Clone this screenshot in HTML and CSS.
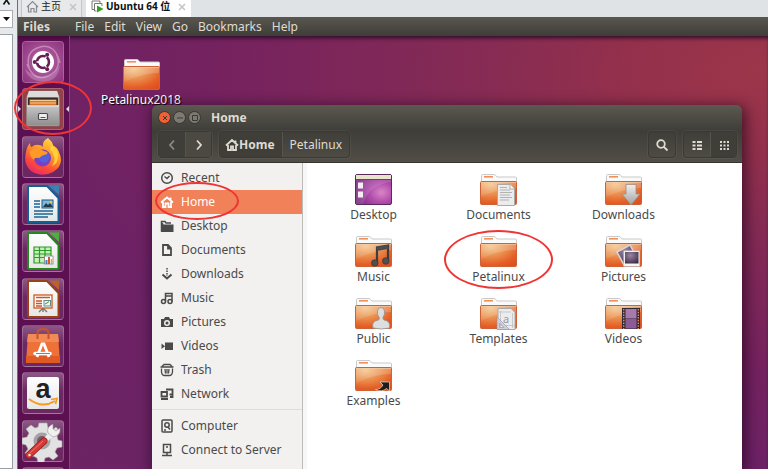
FILE: index.html
```
<!DOCTYPE html>
<html lang="en">
<head>
<meta charset="utf-8">
<title>Ubuntu 64 位</title>
<meta name="viewport" content="width=device-width, initial-scale=1">
<link rel="stylesheet" href="styles.css">
</head>
<body>
<svg class="defs" width="0" height="0" aria-hidden="true">
  <defs>
    <radialGradient id="orange" cx=".28" cy=".12" r="1"><stop offset="0" stop-color="#f3c084"/><stop offset=".45" stop-color="#e98d4c"/><stop offset=".8" stop-color="#e55d25"/><stop offset="1" stop-color="#df5020"/></radialGradient>
    <linearGradient id="shine" x1="0" y1="0" x2="0" y2="1"><stop offset="0" stop-color="#fff" stop-opacity=".25"/><stop offset="1" stop-color="#fff" stop-opacity=".08"/></linearGradient>
    <linearGradient id="silver" x1="0" y1="0" x2="0" y2="1"><stop offset="0" stop-color="#f0f0f0"/><stop offset="1" stop-color="#a0a0a0"/></linearGradient>
    <linearGradient id="steel" x1="0" y1="0" x2="0" y2="1"><stop offset="0" stop-color="#c6c6c6"/><stop offset="1" stop-color="#8e8e8e"/></linearGradient>
    <linearGradient id="paper" x1="0" y1="0" x2="0" y2="1"><stop offset="0" stop-color="#fff"/><stop offset="1" stop-color="#e6e6e6"/></linearGradient>
    <radialGradient id="violet" cx=".72" cy=".6" r=".75"><stop offset="0" stop-color="#da86c6"/><stop offset=".45" stop-color="#b04bab"/><stop offset="1" stop-color="#752a7c"/></radialGradient>
    <radialGradient id="photo" cx=".4" cy=".3" r=".8"><stop offset="0" stop-color="#9a85a4"/><stop offset="1" stop-color="#3a2a44"/></radialGradient>
    <linearGradient id="fire" x1=".8" y1="0" x2=".3" y2="1"><stop offset="0" stop-color="#ffe14a"/><stop offset=".4" stop-color="#ff9a24"/><stop offset=".75" stop-color="#fb4a3c"/><stop offset="1" stop-color="#e8286c"/></linearGradient>
    <symbol id="folder" viewBox="0 0 37 32">
      <path d="M1.5 9V1.500Q1.500.5 2.500.5H14q1 0 1.600.8L17 3H35.500q1 0 1 1V9z" fill="#fafafa" stroke="#c9c9c9"/>
      <path d="M4 2.800h9" stroke="#f0915c" stroke-width="1.600"/>
      <rect x=".5" y="7.500" width="36" height="23" rx="1" fill="url(#orange)" stroke="#ce6136"/>
      <path d="M1 8H36V14Q20 14 1 23z" fill="url(#shine)"/>
      <path d="M1 8.500H36" stroke="#f8cfa5" opacity=".6"/>
    </symbol>
  </defs>
</svg>

<div class="host">
  <aside class="host-side" aria-label="Library">
    <svg class="host-close" viewBox="0 0 13 9" aria-hidden="true"><path d="M3.500 4.500 6.500 0 9.500 4.500" fill="none" stroke="#111" stroke-width="1.600"/></svg>
    <button class="host-drop" aria-label="Filter"><svg viewBox="0 0 9 6"><path d="M1 1H8L4.500 5z" fill="#111"/></svg></button>
    <div class="host-tree"></div>
  </aside>
  <div class="host-main">
    <nav class="tabs">
      <div class="tab">
        <svg class="tab-icon" viewBox="0 0 13 13"><path d="M1 7 6.500 1.500 12 7M2.500 6v6H5V8.500H8V12h2.500V6" fill="none" stroke="#888b90" stroke-width="1.200"/></svg>
        <a href="#home">主页</a><button class="tab-x" aria-label="Close tab"><svg viewBox="0 0 8 8"><path d="M1 1 7 7M7 1 1 7"/></svg></button>
      </div>
      <div class="tab tab-on">
        <svg class="tab-icon" viewBox="0 0 13 13"><path d="M3 9.500H1V1H9V3" fill="none" stroke="#777"/><path d="M5.500 11H3.500V3.500h7.500V6" fill="#fff" stroke="#777"/><path d="M6 5.500V12.500L12.500 9z" fill="#2fa31e"/></svg>
        <a href="#vm">Ubuntu 64 位</a><button class="tab-x" aria-label="Close tab"><svg viewBox="0 0 8 8"><path d="M1 1 7 7M7 1 1 7"/></svg></button>
      </div>
    </nav>

    <div class="guest">
      <header class="menubar">
        <strong>Files</strong>
        <nav class="menus"><button>File</button><button>Edit</button><button>View</button><button>Go</button><button>Bookmarks</button><button>Help</button></nav>
      </header>
      <div class="desk">
        <nav class="launcher" aria-label="Launcher"><div class="tiles">
          <button class="tile tile-dash" aria-label="Search your computer"><svg viewBox="0 0 42 42">
            <g fill="none" stroke="#e3b8d8" opacity=".55" stroke-width="1.500"><path d="M7 27Q3 10 18 6T38 22"/><path d="M35 14Q40 29 26 35T5 23"/></g>
            <path d="M3 28Q10 35 21 36 33 36 38 24 36 40 22 41 6 40 3 28" fill="#fff" opacity=".2"/>
            <circle cx="21" cy="21" r="11" fill="#fff"/><circle cx="21" cy="21" r="6" fill="none" stroke="#642058" stroke-width="2.600"/>
            <g stroke="#fff" stroke-width="1.300"><path d="M21 21H12M21 21 26 13M21 21 26 29"/></g><circle cx="21" cy="21" r="4" fill="#fff"/>
            <g fill="#642058"><circle cx="12.700" cy="21" r="2"/><circle cx="25.200" cy="13.800" r="2"/><circle cx="25.200" cy="28.200" r="2"/></g></svg></button>
          <button class="tile tile-files" aria-label="Files"><svg viewBox="0 0 42 42">
            <path d="M7 3H35L37.500 10V36Q37.500 38 36 38H6Q4.500 38 4.500 36V10z" fill="#b5b4b2" stroke="#85807c" stroke-width=".6"/><path d="M7 3H35L37 9H5z" fill="#dcdcda"/>
            <rect x="6" y="9.500" width="30" height="8" rx="1" fill="#3b2a22"/><path d="M7.500 11.500H34.500V17.500H7.500z" fill="#d9752b"/><path d="M8 12.500H34M8 15H34" stroke="#f5cd98"/>
            <rect x="5" y="17.500" width="32" height="20" fill="url(#steel)"/><path d="M5 18H37" stroke="#eee"/>
            <rect x="16.500" y="25.500" width="9" height="6" rx="1" fill="#eee" stroke="#4b4b4b" stroke-width="1.200"/><path d="M18.500 29.500H23.500" stroke="#555"/></svg></button>
          <button class="tile" aria-label="Firefox"><svg viewBox="0 0 42 42">
            <path d="M26 2Q30 5 31.500 10 35 11 37 16 43 29 31 36 20 42 9 35 1 28 4 16 5 10 8 7 8 10 9.500 11 13 8 17 9 20 9 21 11 20 5 26 2" fill="url(#fire)"/>
            <circle cx="20.500" cy="22" r="8.500" fill="#7a3fc2"/><circle cx="22" cy="21" r="5.500" fill="#5560dd"/>
            <path d="M8 15Q14 10 22 15 27 16 25 18 20 19 17 22 12 21 12 24 7 20 8 15" fill="#ff9a28"/>
            <path d="M28 13Q36 22 30 30 37 27 36 18 34 11 30 9z" fill="#ffcf3c"/><path d="M8 24Q12 34 24 32 14 38 8 24" fill="#fb4a3c"/></svg></button>
          <button class="tile" aria-label="LibreOffice Writer"><svg viewBox="0 0 42 42">
            <path d="M7 3H25L36.500 15V38Q36.500 39 35.500 39H7Q6 39 6 38V4Q6 3 7 3z" fill="url(#paper)" stroke="#126093" stroke-width="2"/><path d="M27 2.500H37V12z" fill="#3a81b5"/>
            <path d="M12 18H18M12 21H18M12 24H18M12 28H31M12 31H31M12 34H26" stroke="#1a6699" stroke-width="1.600"/><rect x="20" y="17" width="11" height="8" fill="#7fb9df" stroke="#1a5b8a"/><path d="M21 24 24 20 26 22 28 20 31 24z" fill="#233a49"/><circle cx="29" cy="19" r="1.300" fill="#f5c542"/></svg></button>
          <button class="tile" aria-label="LibreOffice Calc"><svg viewBox="0 0 42 42">
            <path d="M7 3H25L36.500 15V38Q36.500 39 35.500 39H7Q6 39 6 38V4Q6 3 7 3z" fill="url(#paper)" stroke="#23891d" stroke-width="2"/><path d="M27 2.500H37V12z" fill="#4caf3e"/>
            <rect x="12" y="17" width="17" height="16" fill="#c8efb9"/><path d="M12 17H29V33H12zM12 20.500H29M12 24H29M12 27.500H29M17.500 17V33M23 17V33" fill="none" stroke="#2c9b2a" stroke-width="1.200"/><rect x="22.500" y="26" width="8.500" height="8" fill="#fff" stroke="#777" stroke-width=".7"/><path d="M24.500 34V30" stroke="#3a80c8" stroke-width="2"/><path d="M27 34V27" stroke="#d9532b" stroke-width="2"/><path d="M29.500 34V29" stroke="#e9a23b" stroke-width="1.500"/></svg></button>
          <button class="tile" aria-label="LibreOffice Impress"><svg viewBox="0 0 42 42">
            <path d="M7 3H25L36.500 15V38Q36.500 39 35.500 39H7Q6 39 6 38V4Q6 3 7 3z" fill="url(#paper)" stroke="#9a4216" stroke-width="2"/><path d="M27 2.500H37V12z" fill="#b9622e"/>
            <path d="M21 30V34M21 30 17 34M21 30 25 34" stroke="#777" stroke-width="1.400"/><rect x="12" y="17" width="18" height="13" fill="#fff" stroke="#cc5a1e" stroke-width="1.300"/><path d="M14 19.500H28M14 23H20M14 25.500H20M14 28H20" stroke="#c5572a" stroke-width="1.500"/><rect x="22" y="22.500" width="6.500" height="5.500" fill="#ecf7e6" stroke="#688"/><path d="M23 26 25 25 27 23.500" stroke="#3d9e2b" fill="none"/></svg></button>
          <button class="tile" aria-label="Ubuntu Software"><svg viewBox="0 0 42 42">
            <path d="M6 9H36L38 38H4z" fill="#ee7138"/><path d="M6 9H36L37 17H5z" fill="#f28a55"/><path d="M4 31H38V38H4z" fill="#e05a24"/>
            <path d="M15.500 14V8Q15.500 4 21 4T26.500 8V14" fill="none" stroke="#c9532c" stroke-width="2"/>
            <path d="M15 32 20 19H22L27 32" fill="none" stroke="#fff" stroke-width="2.800"/><path d="M13 28.500H28" stroke="#fff" stroke-width="3.500" stroke-linecap="round"/><path d="M14 28.500H28" stroke="#e6602b"/></svg></button>
          <button class="tile" aria-label="Amazon"><svg viewBox="0 0 42 42"><rect x="5" y="5" width="32" height="32" rx="2" fill="url(#paper)"/><text x="21" y="26" text-anchor="middle" class="logo-a">a</text><path d="M7 27Q20 37 33 29" fill="none" stroke="#f79a1e" stroke-width="2"/><path d="M29 27.500 35 26.500 33.500 32" fill="none" stroke="#f79a1e" stroke-width="1.700"/></svg></button>
          <button class="tile" aria-label="System Settings"><svg viewBox="0 0 42 42">
            <path d="M17 3h8l1 5 4 2 4-3 4 5-3 4 1 4 4 1v6l-5 1-2 4 3 4-5 4-4-3-4 1-1 5h-6l-1-5-4-2-4 2-4-5 3-4-2-4-4-1v-6l5-1 2-4-3-4 5-4 4 3 3-1z" fill="#e2e2e2" stroke="#aaa" stroke-width=".6"/><circle cx="20" cy="21" r="8.500" fill="#a4a2a3"/><circle cx="20" cy="21" r="5" fill="#77596f"/>
            <path d="M20 24 29 14" stroke="#eee" stroke-width="5"/><path d="M26 13Q24 7 31 4L31 9 34 11 38 8Q39 15 31 17z" fill="#f1f1f1" stroke="#999" stroke-width=".6"/><path d="M7 35 22 21" stroke="#8f1616" stroke-width="7" stroke-linecap="round"/><path d="M7 35 22 21" stroke="#d63a36" stroke-width="5.500" stroke-linecap="round"/><path d="M8 33 21 21" stroke="#ef7a70" stroke-width="1"/><circle cx="7.500" cy="35" r="1.200" fill="#eee"/></svg></button>
          <button class="tile" aria-label="Disk"></button>
        </div></nav>
        <main class="wallpaper">
          <a class="shortcut" href="#petalinux2018"><svg class="folder"><use href="#folder"/></svg><span>Petalinux2018</span></a>

          <section class="window" aria-label="Home">
            <header class="chrome">
              <div class="title">
                <button class="dot dot-close" aria-label="Close"><svg viewBox="0 0 12 12"><path d="M4 4 8 8M8 4 4 8"/></svg></button>
                <button class="dot" aria-label="Minimize"><svg viewBox="0 0 12 12"><path d="M3 6H9"/></svg></button>
                <button class="dot" aria-label="Maximize"><svg viewBox="0 0 12 12"><path d="M3.500 3.500H8.500V8.500H3.500z"/></svg></button>
                <h1>Home</h1>
              </div>
              <div class="tools">
                <div class="group"><button class="sq on" aria-label="Back"><svg class="dim" viewBox="0 0 14 14"><path d="M9 2.500 5 7 9 11.500"/></svg></button><button class="sq lit" aria-label="Forward"><svg viewBox="0 0 14 14"><path d="M5 2.500 9 7 5 11.500"/></svg></button></div>
                <div class="group"><button class="crumb on"><svg viewBox="0 0 14 14"><path d="M1 7.500 7 2 13 7.500M3 7V12H6V8.500H8V12H11V7M10.500 5V2.500"/></svg>Home</button><button class="crumb">Petalinux</button></div>
                <div class="group push"><button class="sq" aria-label="Search"><svg viewBox="0 0 14 14"><circle cx="6" cy="6" r="3.800"/><path d="M8.500 8.500 12.500 12.500"/></svg></button></div>
                <div class="group"><button class="sq" aria-label="List view"><svg viewBox="0 0 14 14"><path d="M2.500 4H5.500M7 4H12M2.500 7.500H5.500M7 7.500H12M2.500 11H5.500M7 11H12"/></svg></button><button class="sq on" aria-label="Icon view"><svg class="grid-icon" viewBox="0 0 14 14"><path d="M3 4H12M3 7.500H12M3 11H12"/></svg></button></div>
              </div>
            </header>
            <div class="body">
              <nav class="places">
                <a href="#recent"><svg viewBox="0 0 14 14"><circle cx="7" cy="7" r="5.300"/><path d="M4.500 5.500 7 7.500 9.500 5"/></svg>Recent</a>
                <a href="#home" class="here"><svg viewBox="0 0 14 14"><path d="M1 7.500 7 2.500 13 7.500M3 7V12H5.500V8.500H8.500V12H11V7M10.500 5V2.500" stroke-width="1.800"/></svg>Home</a>
                <a href="#desktop"><svg viewBox="0 0 14 14"><path d="M1.500 12.500V2.500H5L6 4H11" /><path class="solid" d="M3.500 5.500H13.500V13H1V4H3z"/></svg>Desktop</a>
                <a href="#documents"><svg viewBox="0 0 14 14"><path d="M3 2H8L11 5V12H3zM8 2V5.500H11" stroke-width="1.800"/></svg>Documents</a>
                <a href="#downloads"><svg viewBox="0 0 14 14"><path d="M7 1V9" stroke-dasharray="1.500 1"/><path d="M2.500 7.500 7 11.500 11.500 7.500" stroke-width="2"/></svg>Downloads</a>
                <a href="#music"><svg viewBox="0 0 14 14"><path d="M5.500 10.500V2.500H12V10.500M5.500 5H12"/><circle cx="3.500" cy="10.500" r="2"/><circle cx="10" cy="10.500" r="2"/></svg>Music</a>
                <a href="#pictures"><svg viewBox="0 0 14 14"><path class="solid" fill-rule="evenodd" d="M1 4H4L5 2H9L10 4H13V12H1zM7 5A3 3 0 1 0 7 11 3 3 0 1 0 7 5"/><circle cx="7" cy="8" r=".8"/></svg>Pictures</a>
                <a href="#videos"><svg viewBox="0 0 14 14"><path class="solid" d="M5 3.500H13V11H5zM1.500 4.500 5 7.300 1.500 10z"/></svg>Videos</a>
                <a href="#trash"><svg viewBox="0 0 14 14"><path d="M2 3.500 4 1.500H10L12 3.500M0.500 4H13.500M1.500 5.500V9Q2 12.500 4 12.500H10Q12 12.500 12.500 9V5.500M5 6 5.500 10.500M7 6V10.500M9 6 8.500 10.500" stroke-width="1.300"/></svg>Trash</a>
                <a href="#network"><svg viewBox="0 0 14 14"><path d="M1.500 5H7V9.500H1.500zM6 2.500H12.500V7.500H9.500M1 12H8M10 10H12.500V8" stroke-width="1.800"/></svg>Network</a>
                <hr>
                <a href="#computer"><svg viewBox="0 0 14 14"><rect x="2" y="1" width="10" height="12" rx="1"/><circle cx="7" cy="6" r="2.200"/><path d="M8 8 10 10.500M4 11H6"/></svg>Computer</a>
                <a href="#server"><svg viewBox="0 0 14 14"><path d="M3.500 1.500H10.500V9.500H3.500zM7 10V12M2 12.500H12M6 4H8"/></svg>Connect to Server</a>
              </nav>
              <div class="files">
                <a class="file" href="#desktop"><svg class="folder" viewBox="0 0 37 32"><rect x=".5" y=".5" width="36" height="30" rx="1.500" fill="url(#violet)" stroke="#5a2a5c"/><path d="M1 1H36V5H1z" fill="#e7e3cd"/><path d="M1 5.500H36" stroke="#64465f"/><path d="M1 6H36V8Q14 11 8 30H1z" fill="#fff" opacity=".12"/><path d="M3 8.500H8V14.500H3zM3 17.500H8V23.500H3z" fill="#f5eef4"/></svg><span>Desktop</span></a>
                <a class="file" href="#documents"><svg class="folder" viewBox="0 0 37 32"><use href="#folder"/><path d="M17.500 10.500H30L34.500 15V31.500H17.500z" fill="#ececec" stroke="#a9a9a9"/><path d="M30 10.500V15H34.500" fill="#fff" stroke="#aaa"/><path d="M20 13.500H27M20 16H30M20 18.500H32M20 21H30M20 23.500H32M20 26H29" stroke="#b2b2b2"/></svg><span>Documents</span></a>
                <a class="file" href="#downloads"><svg class="folder" viewBox="0 0 37 32"><use href="#folder"/><path d="M21 10.500H31V20H35L26 31 17 20H21z" fill="url(#silver)" stroke="#a08c84" stroke-width=".8"/></svg><span>Downloads</span></a>
                <a class="file" href="#music"><svg class="folder" viewBox="0 0 37 32"><use href="#folder"/><path d="M22 26V11.500L33 9.500V24" fill="none" stroke="#3d3d3d" stroke-width="2.200"/><path d="M22 13 33 11" stroke="#4c4c4c" stroke-width="4"/><circle cx="19.800" cy="27" r="3.300" fill="#505050" stroke="#303030" stroke-width=".6"/><circle cx="30.800" cy="25" r="3.300" fill="#505050" stroke="#303030" stroke-width=".6"/></svg><span>Music</span></a>
                <a class="file" href="#petalinux"><svg class="folder"><use href="#folder"/></svg><span>Petalinux</span></a>
                <a class="file" href="#pictures"><svg class="folder" viewBox="0 0 37 32"><use href="#folder"/><path d="M12 16 25 9 32 22 19 29z" fill="url(#photo)" stroke="#d8d8d8" stroke-width="1.500"/><rect x="18.800" y="14.800" width="16" height="15.500" fill="#f5f5f5" stroke="#bbb" stroke-width=".6"/><rect x="20" y="16" width="13.500" height="11.500" fill="url(#photo)"/></svg><span>Pictures</span></a>
                <a class="file" href="#public"><svg class="folder" viewBox="0 0 37 32"><use href="#folder"/><path d="M18 30Q16 23 23.500 22 25 21 24 19 22 17 22.500 13 23 9.500 26 9.500T29.500 13Q30 17 28 19 27.500 21 29 22 36 23 34.500 30 26 32 18 30z" fill="#dedede" stroke="#929292" stroke-width=".8"/></svg><span>Public</span></a>
                <a class="file" href="#templates"><svg class="folder" viewBox="0 0 37 32"><use href="#folder"/><path d="M18 10.500H31L35 14.500V31.500H18z" fill="#ececec" stroke="#aaa"/><path d="M20.500 13V30M32.500 15V30M19 14H31M19 27.500H34" stroke="#bfc0c4" stroke-width=".8"/><text x="23" y="25" class="sheet-a">a</text><path d="M17 19V31.500H29.500zM19.500 25V29.500H24z" fill="#cdd0dc" fill-rule="evenodd" stroke="#8d90a0" stroke-width=".6"/></svg><span>Templates</span></a>
                <a class="file" href="#videos"><svg class="folder" viewBox="0 0 37 32"><use href="#folder"/><rect x="17" y="10" width="18" height="21" fill="#322938"/><rect x="20.500" y="11" width="11" height="9.500" fill="#a779ad"/><rect x="20.500" y="21" width="11" height="9.500" fill="#8c5a95"/><path d="M18.700 11V31M33.300 11V31" stroke="#d98d5c" stroke-width="1.400" stroke-dasharray="1.500 1.200"/></svg><span>Videos</span></a>
                <a class="file" href="#examples"><svg class="folder" viewBox="0 0 37 32"><use href="#folder"/><path d="M25 22H34.500V31L31.500 28.500Q27 32.500 20.500 29.500 25.500 29.500 28 25z" fill="#1c1c1c" stroke="#f6d9c8" stroke-width=".7"/></svg><span>Examples</span></a>
              </div>
            </div>
          </section>
        </main>
      </div>
    </div>
  </div>
</div>
<div class="ring ring-launcher"></div>
<div class="ring ring-home"></div>
<div class="ring ring-folder"></div>
</body>
</html>
```
FILE: styles.css
```
* { box-sizing: border-box; }
body { margin: 0; height: 100vh; overflow: hidden; position: relative; font: 12px/16px "Noto Sans", "Noto Sans CJK SC", sans-serif; color: #4a4a4a; }
button { margin: 0; padding: 0; border: 0; background: none; font: inherit; color: inherit; display: flex; align-items: center; justify-content: center; }
a { color: inherit; text-decoration: none; }
svg { display: block; flex: none; }
.defs { position: absolute; }
.host { display: flex; height: 100%; background: #e1e4e7; }

.host-side { flex: none; width: 18px; padding-right: 4px; border-right: 1px solid #77677c; display: flex; flex-direction: column; background: #e6e9eb; }
.host-close { width: 13px; height: 9px; }
.host-drop { height: 18px; margin-top: 1px; border: 1px solid #a9adb1; border-left: 0; background: #fff; }
.host-drop svg { width: 9px; height: 6px; }
.host-tree { flex: 1; margin-top: 6px; border: 1px solid #9a9fa5; border-left: 0; background: #fff; }
.host-main { flex: 1; min-width: 0; display: flex; flex-direction: column; }

.tabs { display: flex; gap: 4px; height: 17px; padding-left: 3px; background: #e0e3e6; font-size: 10px; line-height: 13px; color: #222; }
.tab { display: flex; align-items: center; padding: 0 4px; padding-bottom: 4px; gap: 2px; background: #e7e9eb; border: 1px solid #c3c6c9; border-width: 0 1px; }
.tab-on { background: #fff; border-color: #fff; font-weight: 700; color: #111; }
.tab-icon { width: 13px; height: 13px; }
.tab-x { margin-left: 6px; }
.tab-x svg { width: 8px; height: 8px; stroke: #c4c4c4; stroke-width: 1.5; }

.guest { flex: 1; min-height: 0; display: flex; flex-direction: column; }
.menubar { flex: none; height: 19px; display: flex; align-items: center; padding-left: 5px; background: linear-gradient(#59574f, #3e3d38); color: #dfdbd2; }
.menubar strong { width: 52px; }
.menus { display: flex; gap: 10px; }
.desk { flex: 1; min-height: 0; display: flex; background: radial-gradient(ellipse at 100% 8%, #9d364a 0, #93304c 14%, #852b54 28%, #75225f 52%, #6d2266 70%, #6b2463 100%); box-shadow: inset 0 4px 4px -2px #2c0b29; }
.launcher { flex: none; width: 52px; overflow: hidden; background: rgba(82, 4, 68, .6); border-right: 1px solid #88417e; }
.tiles { height: 473px; padding: 5px 5px 0 4px; display: flex; flex-direction: column; justify-content: space-between; align-items: center; }
.tile { flex: none; width: 42px; height: 42px; border-radius: 4px; border: 1px solid rgba(255, 255, 255, .2); background: linear-gradient(rgba(255, 255, 255, .3), rgba(255, 255, 255, .1) 45%, rgba(255, 255, 255, .1)); }
.tile svg { width: 42px; height: 42px; }
.tile-dash { background: radial-gradient(circle, #b869a6, #8d337f); }
.tile-files { position: relative; background: #93404a; }
.tile-files::before, .tile-files::after { content: ""; position: absolute; top: 17px; border: 3px solid transparent; }
.tile-files::before { left: -5px; border-left-color: #ddd; border-right: 0; }
.tile-files::after { right: -6px; border-right-color: #ddd; border-left: 0; }
.logo-a { font: 700 27px "Liberation Sans", sans-serif; fill: #222; }
.sheet-a { font: 11px "Noto Sans", sans-serif; fill: #999; }

.wallpaper { flex: 1; min-width: 0; display: grid; grid-template: 1fr / 1fr; }
.shortcut { grid-area: 1 / 1; justify-self: start; align-self: start; width: 90px; margin: 23px 0 0 26px; display: flex; flex-direction: column; align-items: center; gap: 1px; color: #fff; text-shadow: 1px 1px 1px #000; }
.folder { width: 37px; height: 32px; }

.window { grid-area: 1 / 1; margin: 69px 26px 0 82px; min-height: 0; display: flex; flex-direction: column; border-radius: 6px 6px 0 0; box-shadow: 2px 3px 14px 2px rgba(20, 0, 20, .6); }
.chrome { flex: none; height: 58px; border-radius: 6px 6px 0 0; border-bottom: 1px solid #35342f; background: linear-gradient(#5b5950, #3f3e39 44%, #3f3e39 48%, #514e47); color: #dfdbd2; }
.title { height: 25px; display: flex; align-items: center; gap: 2px; padding-left: 6px; }
.title h1 { margin: 0 0 0 8px; font-size: 12px; line-height: 16px; }
.dot { width: 13px; height: 13px; border-radius: 50%; border: 1px solid #38362f; background: #7c7a71; }
.dot-close { background: #ef6236; }
.dot svg { width: 12px; height: 12px; fill: none; stroke: #3a3832; }
.tools { display: flex; gap: 7px; padding: 1px 5px 0 6px; }
.group { display: flex; height: 27px; border: 1px solid #3a3934; border-radius: 4px; box-shadow: 0 0 0 1px rgba(255, 255, 255, .05); }
.group button + button { border-left: 1px solid #56544c; }
.push { margin-left: auto; }
.sq { width: 26px; }
.lit { background: #4b4942; }
.on { background: #3f3e39; }
.tools svg { width: 14px; height: 14px; fill: none; stroke: #dedacf; stroke-width: 1.8; }
.tools .dim { stroke: #8d8a80; }
.tools .grid-icon { stroke-dasharray: 2 1.5; }
.crumb { padding: 0 7px; }
.crumb.on { padding: 0 7px 0 5px; font-weight: 700; }

.body { flex: 1; min-height: 0; display: flex; background: #fff; overflow: hidden; }
.places { flex: none; width: 151px; padding-top: 3px; background: #f2f1f0; border-right: 1px solid #bdbbb8; }
.places a { display: flex; align-items: center; gap: 7px; height: 24px; padding-left: 8px; }
.places svg { width: 14px; height: 14px; fill: none; stroke: #4a4a4a; stroke-width: 1.5; }
.places .solid { fill: #4a4a4a; stroke: none; }
.places .here { background: #f08158; color: #fff; }
.places .here svg { stroke: #fff; }
.places hr { height: 1px; margin: 3px 0 4px; border: 0; background: #dedcda; }
.files { flex: 1; display: grid; grid-template-columns: repeat(auto-fill, 125px); grid-auto-rows: 62px; align-content: start; padding: 11px 0 0 4px; border-left: 4px solid #f7f7f7; }
.file { display: flex; flex-direction: column; align-items: center; gap: 1px; }

.ring { position: absolute; border: 2px solid #f03434; border-radius: 50%; pointer-events: none; }
.ring-launcher { left: 14px; top: 81px; width: 78px; height: 54px; }
.ring-home { left: 155px; top: 182px; width: 84px; height: 38px; }
.ring-folder { left: 444px; top: 230px; width: 109px; height: 59px; }
```
